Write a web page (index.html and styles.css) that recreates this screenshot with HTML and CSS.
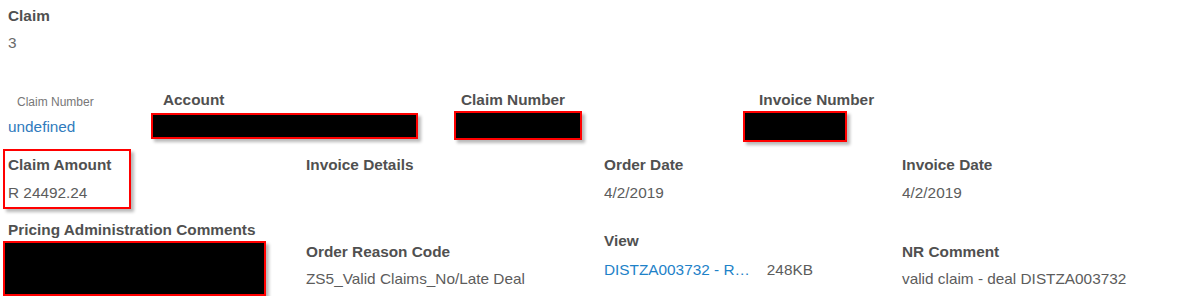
FILE: index.html
```html
<!DOCTYPE html>
<html>
<head>
<meta charset="utf-8">
<link rel="stylesheet" href="styles.css">
</head>
<body>
<div class="page">
  <section class="claim">
    <div class="label">Claim</div>
    <div class="value v-claim">3</div>
  </section>

  <section class="row row1">
    <div class="cell first">
      <div class="small-label">Claim Number</div>
      <a class="link undefined">undefined</a>
    </div>
    <div class="cell">
      <div class="label">Account</div>
      <div class="redact r-account"></div>
    </div>
    <div class="cell">
      <div class="label">Claim Number</div>
      <div class="redact r-claimno"></div>
    </div>
    <div class="cell">
      <div class="label">Invoice Number</div>
      <div class="redact r-invoice"></div>
    </div>
  </section>

  <section class="row row2">
    <div class="cell marked">
      <div class="label">Claim Amount</div>
      <div class="value">R 24492.24</div>
      <span class="annot"></span>
    </div>
    <div class="cell">
      <div class="label">Invoice Details</div>
    </div>
    <div class="cell">
      <div class="label">Order Date</div>
      <div class="value">4/2/2019</div>
    </div>
    <div class="cell">
      <div class="label">Invoice Date</div>
      <div class="value">4/2/2019</div>
    </div>
  </section>

  <section class="row row3">
    <div class="cell">
      <div class="label">Pricing Administration Comments</div>
      <div class="redact r-comments"></div>
    </div>
    <div class="cell c-reason">
      <div class="label">Order Reason Code</div>
      <div class="value v-low">ZS5_Valid Claims_No/Late Deal</div>
    </div>
    <div class="cell c-view">
      <div class="label">View</div>
      <div class="file">
        <a class="link file-name">DISTZA003732 - R…</a>
        <span class="file-size">248KB</span>
      </div>
    </div>
    <div class="cell c-nr">
      <div class="label">NR Comment</div>
      <div class="value v-low">valid claim - deal DISTZA003732</div>
    </div>
  </section>
</div>
</body>
</html>
```

FILE: styles.css
```css
html, body {
  margin: 0;
  padding: 0;
  background: #ffffff;
}

.page {
  padding: 6px 0 0 8px;
  font-family: "Liberation Sans", Arial, sans-serif;
  font-size: 15.35px;
  line-height: 20px;
  color: #595959;
}

.label {
  font-weight: bold;
  color: #505050;
}

.value {
  margin-top: 8px;
  color: #5c5c5c;
}

.v-claim {
  margin-top: 7px;
  color: #6a6a6a;
}

.v-low {
  margin-top: 7px;
}

.small-label {
  font-size: 12px;
  line-height: 16px;
  color: #777777;
  padding-left: 9px;
  margin-top: 4px;
}

.link {
  color: #2f7bbd;
  text-decoration: none;
  cursor: pointer;
}

.undefined {
  display: block;
  margin-top: 7px;
}

.row {
  display: grid;
  grid-template-columns: repeat(4, 298px);
}

.row1 {
  margin-top: 37px;
  grid-template-columns: 155px 298px 298px 298px;
}

.row2 {
  margin-top: 13px;
}

.row3 {
  margin-top: 17px;
}

.cell {
  display: flex;
  flex-direction: column;
  align-items: flex-start;
}

.redact {
  box-sizing: border-box;
  background: #000000;
  border: 2px solid #ff0000;
  box-shadow: 3px 3px 3px rgba(0, 0, 0, 0.28);
}

.r-account {
  width: 267px;
  height: 26px;
  margin: 3px 0 0 -12px;
}

.r-claimno {
  width: 128px;
  height: 29px;
  margin: 1px 0 0 -7px;
}

.r-invoice {
  width: 104px;
  height: 31px;
  margin: 1px 0 0 -16px;
}

.r-comments {
  width: 263px;
  height: 55px;
  margin: 1px 0 0 -5px;
}

.marked {
  position: relative;
}

.annot {
  position: absolute;
  left: -5px;
  top: -6px;
  width: 128px;
  height: 60px;
  box-sizing: border-box;
  border: 2px solid #ff0000;
  box-shadow: 3px 3px 3px rgba(0, 0, 0, 0.28);
}

.c-reason,
.c-nr {
  padding-top: 22px;
}

.c-view {
  padding-top: 11px;
}

.file {
  margin-top: 9px;
  display: flex;
  align-items: baseline;
}

.file-name {
  color: #1e82c8;
}

.file-size {
  margin-left: 17px;
  color: #5c5c5c;
}
```
